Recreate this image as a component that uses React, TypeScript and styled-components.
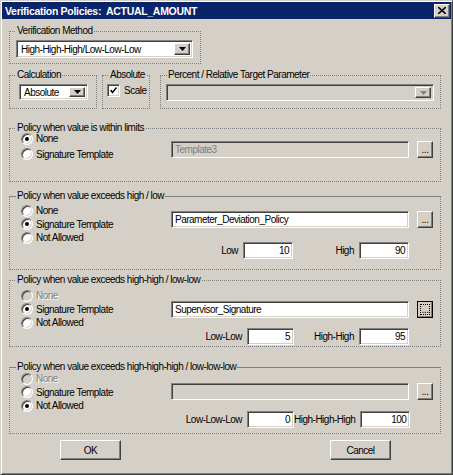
import React from 'react';
import styled, { createGlobalStyle, css } from 'styled-components';

const GlobalStyle = createGlobalStyle`
  html, body {
    margin: 0;
    padding: 0;
    background: #d4d0c8;
  }
  body {
    font-family: 'Liberation Sans', Arial, sans-serif;
    font-size: 10px;
    letter-spacing: -0.5px;
    color: #000;
  }
`;

const raised = css`
  border: 1px solid;
  border-color: #fff #404040 #404040 #fff;
  box-shadow: inset -1px -1px 0 #808080, inset 1px 1px 0 #d4d0c8;
  background: #d4d0c8;
`;

const sunken = css`
  border: 1px solid;
  border-color: #808080 #fff #fff #808080;
  box-shadow: inset 1px 1px 0 #404040, inset -1px -1px 0 #d4d0c8;
`;

const Window = styled.div`
  width: 453px;
  height: 475px;
  box-sizing: border-box;
  background: #d4d0c8;
  border: 1px solid;
  border-color: #d4d0c8 #404040 #404040 #d4d0c8;
  box-shadow: inset 1px 1px 0 #fff, inset -1px -1px 0 #808080;
  padding: 1px;
  display: flex;
  flex-direction: column;
`;

const TitleBar = styled.div`
  height: 17px;
  background: #0a246a;
  color: #fff;
  font-weight: bold;
  font-size: 10.5px;
  letter-spacing: -0.3px;
  display: flex;
  align-items: center;
  justify-content: space-between;
  padding: 0 1px 0 3px;
`;

const CloseButton = styled.span`
  ${raised};
  width: 16px;
  height: 14px;
  box-sizing: border-box;
  display: flex;
  align-items: center;
  justify-content: center;
`;

const Content = styled.div`
  display: flex;
  flex-direction: column;
  padding: 0 10px 0 7px;
`;

const Group = styled.fieldset<{ $w?: number; $h: number; $mt: number; $ml?: number; $solid?: boolean }>`
  margin: ${p => p.$mt}px 0 0 ${p => p.$ml ?? 0}px;
  min-width: 0;
  box-sizing: border-box;
  width: ${p => (p.$w ? `${p.$w}px` : 'auto')};
  height: ${p => p.$h}px;
  padding: 0;
  border: 1px dotted #808080;
  border-top-style: ${p => (p.$solid ? 'solid' : 'dotted')};
`;

const Legend = styled.legend`
  padding: 0 1px;
  margin-left: 6px;
  line-height: 12px;
  height: 12px;
`;

const Row = styled.div`
  display: flex;
  margin-top: 5px;
`;

const GroupBody = styled.div<{ $pad: string }>`
  padding: ${p => p.$pad};
  display: flex;
  align-items: center;
`;

const Combo = styled.div<{ $w: number; $h: number; $disabled?: boolean }>`
  ${sunken};
  width: ${p => p.$w}px;
  height: ${p => p.$h}px;
  box-sizing: border-box;
  display: flex;
  padding: 2px;
  background: ${p => (p.$disabled ? '#d4d0c8' : '#fff')};
`;

const ComboText = styled.span`
  flex: 1;
  display: flex;
  align-items: center;
  padding-left: 2px;
  white-space: nowrap;
`;

const ComboArrow = styled.span`
  ${raised};
  width: 16px;
  box-sizing: border-box;
  display: flex;
  align-items: center;
  justify-content: center;
`;

const CheckBox = styled.span`
  ${sunken};
  width: 13px;
  height: 13px;
  box-sizing: border-box;
  background: #fff;
  display: inline-flex;
  align-items: center;
  justify-content: center;
  margin-right: 4px;
`;

const PolicyBody = styled.div<{ $shift: number }>`
  display: grid;
  grid-template-columns: 150px 1fr;
  align-items: start;
  margin-top: ${p => p.$shift}px;
  padding-left: 11px;
`;

const RadioList = styled.div`
  display: flex;
  flex-direction: column;
`;

const RadioRow = styled.div<{ $h: number; $disabled?: boolean }>`
  height: ${p => p.$h}px;
  display: flex;
  align-items: center;
  gap: 3px;
  white-space: nowrap;
  color: ${p => (p.$disabled ? '#808080' : '#000')};
  text-shadow: ${p => (p.$disabled ? '1px 1px 0 #fff' : 'none')};
`;

const RadioDot = styled.span<{ $checked?: boolean; $disabled?: boolean }>`
  ${sunken};
  width: 12px;
  height: 12px;
  border-radius: 50%;
  box-sizing: border-box;
  background: ${p => (p.$disabled ? '#d4d0c8' : '#fff')};
  display: inline-flex;
  align-items: center;
  justify-content: center;
  &::after {
    content: '';
    display: ${p => (p.$checked ? 'block' : 'none')};
    width: 4px;
    height: 4px;
    border-radius: 50%;
    background: #000;
  }
`;

const RightSide = styled.div<{ $top: number; $gap: number }>`
  margin-top: ${p => p.$top}px;
  display: flex;
  flex-direction: column;
  gap: ${p => p.$gap}px;
`;

const FieldRow = styled.div`
  display: flex;
  gap: 8px;
`;

const TextField = styled.div<{ $w: number; $disabled?: boolean; $right?: boolean }>`
  ${sunken};
  width: ${p => p.$w}px;
  height: 17px;
  box-sizing: border-box;
  background: ${p => (p.$disabled ? '#d4d0c8' : '#fff')};
  color: ${p => (p.$disabled ? '#808080' : '#000')};
  display: flex;
  align-items: center;
  justify-content: ${p => (p.$right ? 'flex-end' : 'flex-start')};
  padding: 0 3px;
  white-space: nowrap;
`;

const BrowseButton = styled.span<{ $focus?: boolean }>`
  ${raised};
  width: 16px;
  height: 17px;
  box-sizing: border-box;
  display: flex;
  align-items: flex-end;
  justify-content: center;
  line-height: 10px;
  padding-bottom: 2px;
  ${p =>
    p.$focus &&
    css`
      border: 1px solid #000;
      outline: 1px dotted #000;
      outline-offset: -4px;
    `}
`;

const Limits = styled.div<{ $w1: number; $c1: number }>`
  display: grid;
  grid-template-columns: ${p => p.$c1}px ${p => p.$w1}px 1fr 50px;
  align-items: center;
  width: 238px;
`;

const LimitLabel = styled.span`
  justify-self: end;
  padding-right: 5px;
  white-space: nowrap;
`;

const ButtonRow = styled.div`
  display: flex;
  justify-content: space-between;
  margin-top: 6px;
  padding: 0 50px 0 51px;
`;

const PushButton = styled.span`
  ${raised};
  width: 61px;
  height: 20px;
  box-sizing: border-box;
  display: flex;
  align-items: center;
  justify-content: center;
`;

const Arrow = ({ disabled }: { disabled?: boolean }) => (
  <svg width="7" height="4" viewBox="0 0 7 4">
    <polygon points="0,0 7,0 3.5,4" fill={disabled ? '#808080' : '#000'} />
  </svg>
);

type Option = { label: string; checked?: boolean; disabled?: boolean };

type Policy = {
  title: string;
  solid?: boolean;
  mt: number;
  h: number;
  shift: number;
  rowH: number;
  fieldTop: number;
  gap: number;
  options: Option[];
  template: string;
  templateDisabled?: boolean;
  focus?: boolean;
  limits?: { lo: string; loVal: string; hi: string; hiVal: string; w1: number; c1: number };
};

const policies: Policy[] = [
  {
    title: 'Policy when value is within limits',
    mt: 13,
    h: 60,
    shift: -3,
    rowH: 15.5,
    fieldTop: 10,
    gap: 0,
    options: [{ label: 'None', checked: true }, { label: 'Signature Template' }],
    template: 'Template3',
    templateDisabled: true,
  },
  {
    title: 'Policy when value exceeds high / low',
    solid: true,
    mt: 8,
    h: 80,
    shift: 2,
    rowH: 13.5,
    fieldTop: 7,
    gap: 14,
    options: [{ label: 'None' }, { label: 'Signature Template', checked: true }, { label: 'Not Allowed' }],
    template: 'Parameter_Deviation_Policy',
    limits: { lo: 'Low', loVal: '10', hi: 'High', hiVal: '90', w1: 50, c1: 72 },
  },
  {
    title: 'Policy when value exceeds high-high / low-low',
    mt: 4,
    h: 73,
    shift: 3,
    rowH: 13.5,
    fieldTop: 12,
    gap: 10,
    options: [
      { label: 'None', disabled: true },
      { label: 'Signature Template', checked: true },
      { label: 'Not Allowed' },
    ],
    template: 'Supervisor_Signature',
    focus: true,
    limits: { lo: 'Low-Low', loVal: '5', hi: 'High-High', hiVal: '95', w1: 47, c1: 76 },
  },
  {
    title: 'Policy when value exceeds high-high-high / low-low-low',
    solid: true,
    mt: 14,
    h: 73,
    shift: -1,
    rowH: 13.5,
    fieldTop: 11,
    gap: 11,
    options: [
      { label: 'None', disabled: true },
      { label: 'Signature Template' },
      { label: 'Not Allowed', checked: true },
    ],
    template: '',
    templateDisabled: true,
    limits: { lo: 'Low-Low-Low', loVal: '0', hi: 'High-High-High', hiVal: '100', w1: 47, c1: 76 },
  },
];

const PolicyGroup: React.FC<{ policy: Policy }> = ({ policy }) => (
  <Group $h={policy.h} $mt={policy.mt} $solid={policy.solid}>
    <Legend>{policy.title}</Legend>
    <PolicyBody $shift={policy.shift}>
      <RadioList>
        {policy.options.map(o => (
          <RadioRow key={o.label} $h={policy.rowH} $disabled={o.disabled}>
            <RadioDot $checked={o.checked} $disabled={o.disabled} />
            {o.label}
          </RadioRow>
        ))}
      </RadioList>
      <RightSide $top={policy.fieldTop} $gap={policy.gap}>
        <FieldRow>
          <TextField $w={238} $disabled={policy.templateDisabled}>
            {policy.template}
          </TextField>
          <BrowseButton $focus={policy.focus}>...</BrowseButton>
        </FieldRow>
        {policy.limits && (
          <Limits $w1={policy.limits.w1} $c1={policy.limits.c1}>
            <LimitLabel>{policy.limits.lo}</LimitLabel>
            <TextField $w={policy.limits.w1} $right>
              {policy.limits.loVal}
            </TextField>
            <LimitLabel>{policy.limits.hi}</LimitLabel>
            <TextField $w={50} $right>
              {policy.limits.hiVal}
            </TextField>
          </Limits>
        )}
      </RightSide>
    </PolicyBody>
  </Group>
);

const App: React.FC = () => (
  <>
    <GlobalStyle />
    <Window>
      <TitleBar>
        <span>Verification Policies:&nbsp; ACTUAL_AMOUNT</span>
        <CloseButton>
          <svg width="8" height="7" viewBox="0 0 8 7">
            <path d="M0 0 L8 7 M8 0 L0 7" stroke="#000" strokeWidth="1.6" />
          </svg>
        </CloseButton>
      </TitleBar>
      <Content>
        <Group $w={192} $h={39} $mt={6}>
          <Legend>Verification Method</Legend>
          <GroupBody $pad="3px 0 0 6px">
            <Combo $w={177} $h={18}>
              <ComboText>High-High-High/Low-Low-Low</ComboText>
              <ComboArrow>
                <Arrow />
              </ComboArrow>
            </Combo>
          </GroupBody>
        </Group>
        <Row>
          <Group $w={88} $h={40} $mt={0}>
            <Legend>Calculation</Legend>
            <GroupBody $pad="3px 0 0 9px">
              <Combo $w={69} $h={16}>
                <ComboText>Absolute</ComboText>
                <ComboArrow>
                  <Arrow />
                </ComboArrow>
              </Combo>
            </GroupBody>
          </Group>
          <Group $w={48} $h={40} $mt={0} $ml={5}>
            <Legend>Absolute</Legend>
            <GroupBody $pad="3px 0 0 4px">
              <CheckBox>
                <svg width="7" height="7" viewBox="0 0 7 7">
                  <path d="M0.5 3 L2.5 5.5 L6.5 0.5" stroke="#000" strokeWidth="1.5" fill="none" />
                </svg>
              </CheckBox>
              Scale
            </GroupBody>
          </Group>
          <Group $w={281} $h={40} $mt={0} $ml={10}>
            <Legend>Percent / Relative Target Parameter</Legend>
            <GroupBody $pad="3px 0 0 5px">
              <Combo $w={268} $h={17} $disabled>
                <ComboText />
                <ComboArrow>
                  <Arrow disabled />
                </ComboArrow>
              </Combo>
            </GroupBody>
          </Group>
        </Row>
        {policies.map(p => (
          <PolicyGroup key={p.title} policy={p} />
        ))}
        <ButtonRow>
          <PushButton>OK</PushButton>
          <PushButton>Cancel</PushButton>
        </ButtonRow>
      </Content>
    </Window>
  </>
);

export default App;
